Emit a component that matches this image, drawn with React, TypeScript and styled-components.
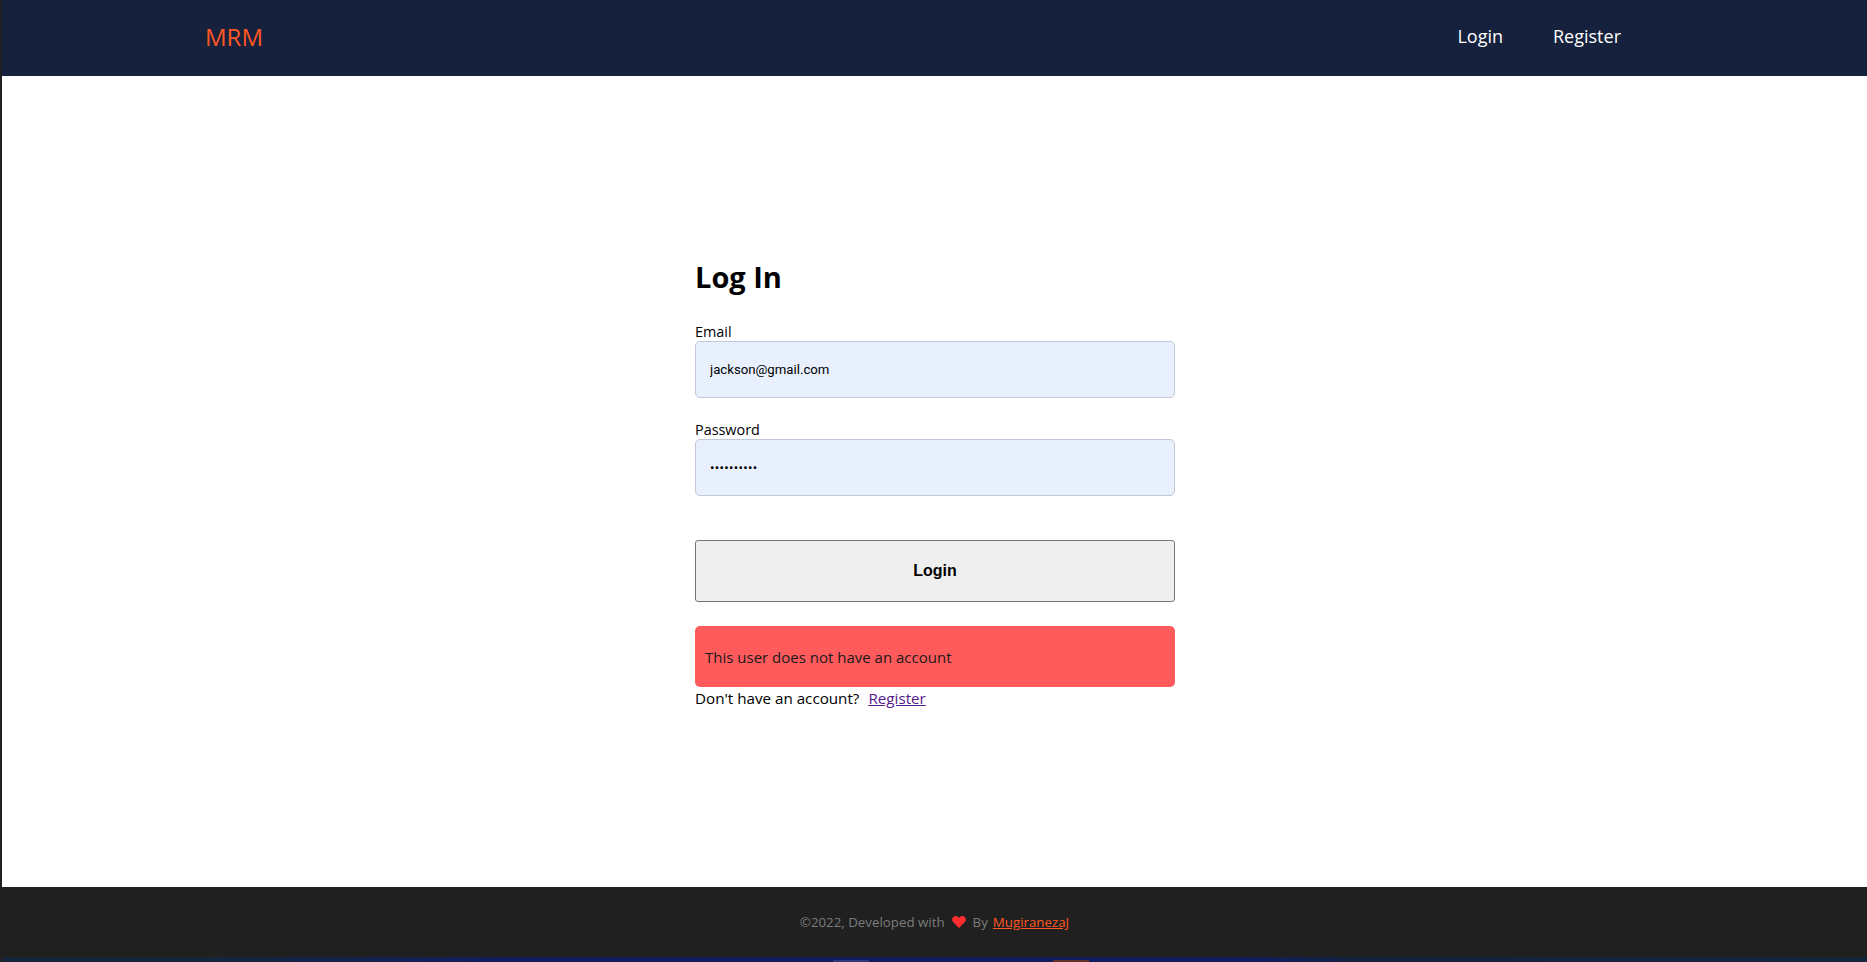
import React from "react";
import styled, { createGlobalStyle } from "styled-components";

const GlobalStyle = createGlobalStyle`
  * {
    box-sizing: border-box;
  }
  html, body {
    margin: 0;
    padding: 0;
    height: 100%;
    overflow: hidden;
    background: #202020;
  }
  body {
    font-family: "Open Sans", "Noto Sans", sans-serif;
  }
`;

const App: React.FC = () => {
  return (
    <>
      <GlobalStyle />
      <Page>
        <Navbar>
          <Brand>MRM</Brand>
          <NavLinks>
            <NavLink href="#">Login</NavLink>
            <NavLink href="#">Register</NavLink>
          </NavLinks>
        </Navbar>
        <Main>
          <Form onSubmit={(e) => e.preventDefault()}>
            <Title>Log In</Title>
            <Field>
              <Label htmlFor="email">Email</Label>
              <Input id="email" type="email" defaultValue="jackson@gmail.com" />
            </Field>
            <Field>
              <Label htmlFor="password">Password</Label>
              <Input id="password" type="password" defaultValue="1234567890" />
            </Field>
            <SubmitButton type="submit">Login</SubmitButton>
            <ErrorBox>This user does not have an account</ErrorBox>
            <Hint>
              Don't have an account?
              <HintLink href="#">Register</HintLink>
            </Hint>
          </Form>
        </Main>
        <Footer>
          <FooterText>©2022, Developed with</FooterText>
          <Heart viewBox="0 0 16 14">
            <path d="M8 14 1.4 7.4C-.5 5.5-.4 2.700 1.300 1.100 3 -.4 5.600 -.3 7.100 1.300L8 2.200l.9-.9c1.500-1.600 4.100-1.700 5.800-.2 1.700 1.600 1.800 4.400-.1 6.300z" />
          </Heart>
          <FooterText>By</FooterText>
          <FooterLink href="#">MugiranezaJ</FooterLink>
        </Footer>
        <BottomStrip>
          <StripChip color="#2c3a78" />
          <StripChip color="#5e3028" />
        </BottomStrip>
      </Page>
    </>
  );
};
export default App;

const Page = styled.div`
  height: 962px;
  display: flex;
  flex-direction: column;
  background: #fff;
  border-left: 2px solid #202020;
`;

const Navbar = styled.header`
  height: 76px;
  flex-shrink: 0;
  display: flex;
  align-items: center;
  justify-content: space-between;
  padding: 0 246px 4px 203px;
  background: #16213e;
`;

const Brand = styled.div`
  font-size: 24px;
  color: #ff5722;
`;

const NavLinks = styled.nav`
  display: flex;
  gap: 50px;
`;

const NavLink = styled.a`
  font-size: 18px;
  color: #fff;
  text-decoration: none;
`;

const Main = styled.main`
  flex: 1;
  display: flex;
  flex-direction: column;
  align-items: center;
  padding: 181px 0 0 1px;
`;

const Form = styled.form`
  width: 480px;
  display: flex;
  flex-direction: column;
`;

const Title = styled.h1`
  margin: 0 0 24px;
  font-size: 29px;
  line-height: 40px;
  font-weight: 700;
  color: #000;
`;

const Field = styled.div`
  display: flex;
  flex-direction: column;
  margin-bottom: 21px;
`;

const Label = styled.label`
  padding-top: 2px;
  font-size: 14.4px;
  line-height: 18px;
  color: #000;
`;

const Input = styled.input`
  height: 57px;
  padding: 0 14px;
  border: 1px solid #c0c8da;
  border-radius: 5px;
  background: #e8f0fe;
  font-family: "Roboto", sans-serif;
  font-size: 13.2px;
  color: #000;
  outline: none;
  &[type="password"] {
    letter-spacing: 0.3px;
  }
`;

const SubmitButton = styled.button`
  height: 62px;
  margin-top: 23px;
  border: 1px solid #767676;
  border-radius: 3px;
  background: #efefef;
  font-family: "Liberation Sans", sans-serif;
  font-size: 16px;
  font-weight: 700;
  color: #000;
`;

const ErrorBox = styled.div`
  height: 61px;
  margin-top: 24px;
  padding: 20px 10px 0;
  border-radius: 5px;
  background: #ff5a5c;
  font-size: 15px;
  line-height: 22px;
  color: #1a1a1a;
`;

const Hint = styled.p`
  margin: 0;
  font-size: 15.2px;
  line-height: 22px;
  color: #000;
`;

const HintLink = styled.a`
  margin-left: 9px;
  color: #551a8b;
`;

const Footer = styled.footer`
  height: 70px;
  flex-shrink: 0;
  display: flex;
  align-items: center;
  justify-content: center;
  gap: 6px;
  background: #202020;
  font-size: 13.3px;
`;

const FooterText = styled.span`
  color: #7c7c7c;
`;

const Heart = styled.svg`
  width: 14px;
  height: 12px;
  margin: 0 1px;
  fill: #ff2d2d;
`;

const FooterLink = styled.a`
  margin-left: -1px;
  color: #ff5722;
`;

const BottomStrip = styled.div`
  height: 5px;
  flex-shrink: 0;
  display: flex;
  align-items: flex-end;
  gap: 184px;
  padding-left: 831px;
  background: linear-gradient(
    90deg,
    #16263a 0,
    #16263a 200px,
    #101f5c 500px,
    #101f5c 1250px,
    #16213e 1350px,
    #16263a 100%
  );
`;

const StripChip = styled.span<{ color: string }>`
  width: 36px;
  height: 2px;
  background: ${(props) => props.color};
`;
